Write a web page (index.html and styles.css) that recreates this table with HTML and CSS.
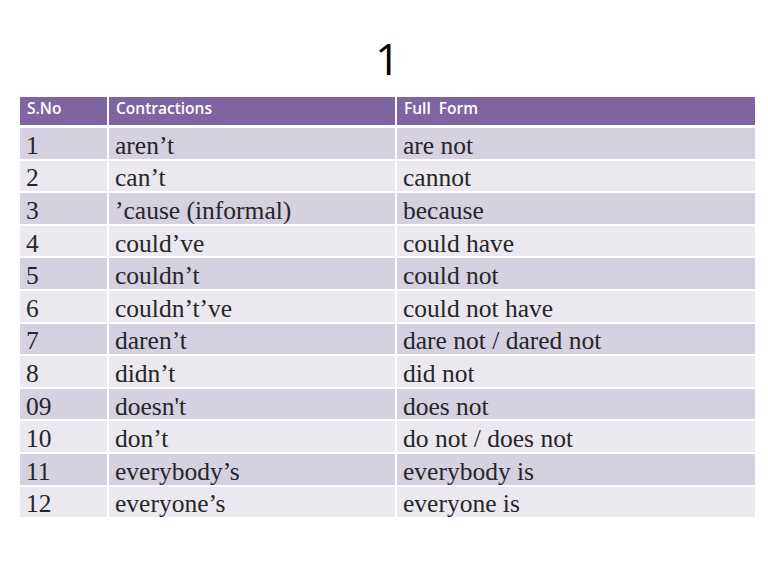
FILE: index.html
```html
<!DOCTYPE html>
<html>
<head>
<meta charset="utf-8">
<link rel="stylesheet" href="styles.css">
</head>
<body>
<div class="slide">
  <h1 class="title">1</h1>
  <div class="table">
    <div class="cell head">S.No</div><div class="cell head">Contractions</div><div class="cell head">Full&nbsp; Form</div>
    <div class="cell odd">1</div><div class="cell odd">aren’t</div><div class="cell odd">are not</div>
    <div class="cell even">2</div><div class="cell even">can’t</div><div class="cell even">cannot</div>
    <div class="cell odd">3</div><div class="cell odd">’cause (informal)</div><div class="cell odd">because</div>
    <div class="cell even">4</div><div class="cell even">could’ve</div><div class="cell even">could have</div>
    <div class="cell odd">5</div><div class="cell odd">couldn’t</div><div class="cell odd">could not</div>
    <div class="cell even">6</div><div class="cell even">couldn’t’ve</div><div class="cell even">could not have</div>
    <div class="cell odd">7</div><div class="cell odd">daren’t</div><div class="cell odd">dare not / dared not</div>
    <div class="cell even">8</div><div class="cell even">didn’t</div><div class="cell even">did not</div>
    <div class="cell odd">09</div><div class="cell odd">doesn't</div><div class="cell odd">does not</div>
    <div class="cell even">10</div><div class="cell even">don’t</div><div class="cell even">do not / does not</div>
    <div class="cell odd">11</div><div class="cell odd">everybody’s</div><div class="cell odd">everybody is</div>
    <div class="cell even">12</div><div class="cell even">everyone’s</div><div class="cell even">everyone is</div>
  </div>
</div>
</body>
</html>
```
FILE: styles.css
```css
html, body {
  margin: 0;
  padding: 0;
  background: #ffffff;
}
.slide {
  width: 768px;
  height: 576px;
  padding: 0 13px 0 20px;
  box-sizing: border-box;
}
.title {
  margin: 0;
  padding-top: 37px;
  height: 97px;
  box-sizing: border-box;
  text-align: center;
  font-family: "Open Sans", sans-serif;
  font-weight: 400;
  font-size: 43px;
  line-height: 1;
  color: #000;
}
.table {
  display: grid;
  grid-template-columns: 87px 286px 358px;
  grid-template-rows: 29px repeat(12, 30.6px);
  column-gap: 2px;
  row-gap: 2px;
}
.cell {
  display: flex;
  align-items: center;
  padding-left: 6px;
  padding-top: 5px;
  font-family: "Liberation Serif", serif;
  font-size: 25.5px;
  color: #262626;
  white-space: nowrap;
  overflow: hidden;
}
.head {
  background: #8064a2;
  color: #ffffff;
  font-family: "Open Sans", sans-serif;
  font-weight: 600;
  font-size: 15.5px;
  margin-bottom: 1px;
  padding-top: 0;
  padding-bottom: 6px;
  padding-left: 7px;
}
.odd { background: #d5d1e1; }
.even { background: #ebe8f0; }
```
